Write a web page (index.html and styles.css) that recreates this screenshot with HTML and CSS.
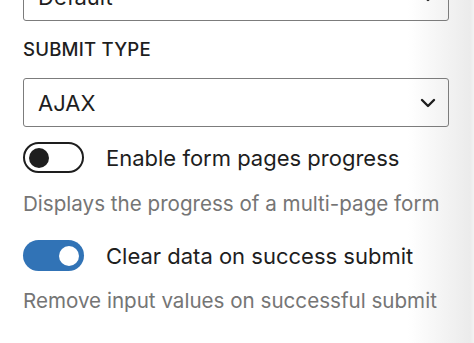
FILE: index.html
```html
<!DOCTYPE html>
<html lang="en">
<head>
<meta charset="utf-8">
<title>Form settings</title>
<link rel="stylesheet" href="styles.css">
</head>
<body>
<div class="panel">
  <div class="select select-first">
    <span class="select-value">Default</span>
    <svg class="chevron" viewBox="0 0 16 10" width="16" height="10"><path d="M2 2 L8 8 L14 2" fill="none" stroke="#1e1e1e" stroke-width="2.4" stroke-linecap="round" stroke-linejoin="round"/></svg>
  </div>
  <div class="field-label">SUBMIT TYPE</div>
  <div class="select">
    <span class="select-value">AJAX</span>
    <svg class="chevron" viewBox="0 0 16 10" width="16" height="10"><path d="M2 2 L8 8 L14 2" fill="none" stroke="#1e1e1e" stroke-width="2.4" stroke-linecap="round" stroke-linejoin="round"/></svg>
  </div>
  <div class="toggle-row row-first">
    <span class="toggle toggle-off"><span class="knob"></span></span>
    <span class="toggle-label">Enable form pages progress</span>
  </div>
  <p class="help help-first">Displays the progress of a multi-page form</p>
  <div class="toggle-row row-second">
    <span class="toggle toggle-on"><span class="knob"></span></span>
    <span class="toggle-label">Clear data on success submit</span>
  </div>
  <p class="help help-second">Remove input values on successful submit</p>
</div>
</body>
</html>
```
FILE: styles.css
```css
html {
  background: linear-gradient(90deg, #ffffff 0, #ffffff 408px, #ebebeb 470px, #f3f3f3 474px);
  min-height: 100%;
}
body {
  margin: 0;
  font-family: Inter, "Liberation Sans", sans-serif;
  color: #1e1e1e;
  overflow: hidden;
  height: 343px;
}
.panel {
  padding-left: 23px;
  width: 426px;
}
.select {
  box-sizing: border-box;
  height: 49px;
  border: 1.5px solid #7c7c7c;
  border-radius: 3px;
  display: flex;
  align-items: center;
  justify-content: space-between;
  padding: 0 12px 0 14px;
  background: transparent;
}
.select-first {
  margin-top: -28px;
}
.select-value {
  font-size: 22px;
  line-height: 28px;
}
.chevron {
  display: block;
}
.field-label {
  margin-top: 14px;
  font-size: 18.6px;
  line-height: 28px;
  font-weight: 500;
  letter-spacing: 0.2px;
  margin-bottom: 15px;
}
.toggle-row {
  display: flex;
  align-items: center;
  height: 31px;
}
.row-first {
  margin-top: 15px;
}
.row-second {
  margin-top: 22px;
}
.toggle {
  box-sizing: border-box;
  width: 61px;
  height: 31px;
  border-radius: 16px;
  display: flex;
  align-items: center;
  flex-shrink: 0;
}
.toggle-off {
  border: 2px solid #1e1e1e;
  padding-left: 4px;
}
.toggle-off .knob {
  width: 20px;
  height: 20px;
  border-radius: 50%;
  background: #1e1e1e;
}
.toggle-on {
  background: #3173b6;
  justify-content: flex-end;
  padding-right: 5px;
}
.toggle-on .knob {
  width: 20px;
  height: 20px;
  border-radius: 50%;
  background: #ffffff;
}
.toggle-label {
  margin-left: 22px;
  font-size: 22px;
  line-height: 28px;
  white-space: nowrap;
}
.help {
  margin: 0;
  font-size: 20.6px;
  line-height: 28px;
  color: #757575;
  white-space: nowrap;
}
.help-first {
  margin-top: 17px;
}
.help-second {
  margin-top: 16px;
}
```
